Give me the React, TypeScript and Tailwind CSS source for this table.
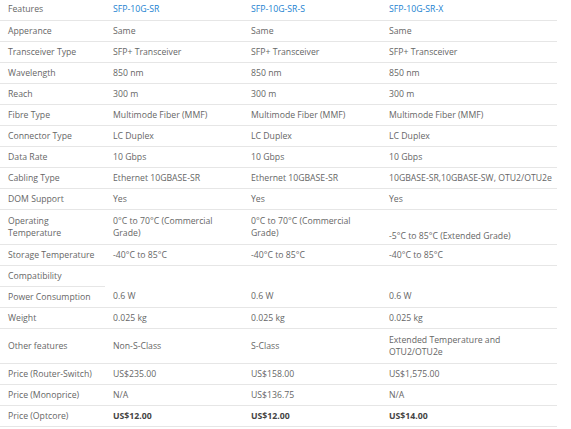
const models = ["SFP-10G-SR", "SFP-10G-SR-S", "SFP-10G-SR-X"];

type Row = {
  label: React.ReactNode;
  values: React.ReactNode[];
  bold?: boolean;
  noLine?: boolean;
  shifted?: boolean;
  tall?: boolean;
};

const rows: Row[] = [
  { label: "Apperance", values: ["Same", "Same", "Same"] },
  { label: "Transceiver Type", values: ["SFP+ Transceiver", "SFP+ Transceiver", "SFP+ Transceiver"] },
  { label: "Wavelength", values: ["850 nm", "850 nm", "850 nm"] },
  { label: "Reach", values: ["300 m", "300 m", "300 m"] },
  { label: "Fibre Type", values: ["Multimode Fiber (MMF)", "Multimode Fiber (MMF)", "Multimode Fiber (MMF)"] },
  { label: "Connector Type", values: ["LC Duplex", "LC Duplex", "LC Duplex"] },
  { label: "Data Rate", values: ["10 Gbps", "10 Gbps", "10 Gbps"] },
  { label: "Cabling Type", values: ["Ethernet 10GBASE-SR", "Ethernet 10GBASE-SR", "10GBASE-SR,10GBASE-SW, OTU2/OTU2e"] },
  { label: "DOM Support", values: ["Yes", "Yes", "Yes"] },
  {
    label: (
      <>
        Operating
        <br />
        Temperature
      </>
    ),
    values: ["0°C to 70°C (Commercial Grade)", "0°C to 70°C (Commercial Grade)", "-5°C to 85°C (Extended Grade)"],
    shifted: true,
    tall: true,
  },
  { label: "Storage Temperature", values: ["-40°C to 85°C", "-40°C to 85°C", "-40°C to 85°C"] },
  { label: "Compatibility", values: ["", "", ""], noLine: true },
  { label: "Power Consumption", values: ["0.6 W", "0.6 W", "0.6 W"] },
  { label: "Weight", values: ["0.025 kg", "0.025 kg", "0.025 kg"] },
  {
    label: "Other features",
    values: [
      "Non-S-Class",
      "S-Class",
      <>
        Extended Temperature and
        <br />
        OTU2/OTU2e
      </>,
    ],
    tall: true,
  },
  { label: "Price (Router-Switch)", values: ["US$235.00", "US$158.00", "US$1,575.00"] },
  { label: "Price (Monoprice)", values: ["N/A", "US$136.75", "N/A"] },
  { label: "Price (Optcore)", values: ["US$12.00", "US$12.00", "US$14.00"], bold: true },
];

export default function App() {
  return (
    <div className="bg-white w-[571px] h-[429px] overflow-hidden font-['Open_Sans',sans-serif] text-[8.7px] leading-[12px] text-[#666]">
      <table className="w-[557px] table-fixed border-collapse -mt-[1px]">
        <colgroup>
          <col className="w-[105px]" />
          <col className="w-[138px]" />
          <col className="w-[138px]" />
          <col className="w-[176px]" />
        </colgroup>
        <thead>
          <tr>
            <th className="h-[21px] text-left font-normal pl-2 pr-0 py-1 border-b border-[#e6e6e6]">Features</th>
            {models.map((m) => (
              <th key={m} className="h-[21px] text-left font-normal px-2 py-1 border-b border-[#e6e6e6] text-[#1a7fd0]">
                {m}
              </th>
            ))}
          </tr>
        </thead>
        <tbody>
          {rows.map((row, r) => (
            <tr key={r}>
              <td
                className={`${row.tall ? "h-[35px]" : "h-[21px]"} pl-2 pr-0 py-1 align-middle border-b border-[#e6e6e6]`}
              >
                {row.label}
              </td>
              {row.values.map((v, i) => {
                const extended = row.shifted && i === 2;
                return (
                  <td
                    key={i}
                    className={[
                      row.tall ? "h-[35px]" : "h-[21px]",
                      i === 2 ? "pl-2 pr-0 whitespace-nowrap" : "px-2",
                      extended ? "align-top pt-[20px] pb-0" : "py-1 align-middle",
                      row.noLine ? "" : "border-b border-[#e6e6e6]",
                      row.bold ? "font-bold text-[#444]" : "",
                    ].join(" ")}
                  >
                    {v}
                  </td>
                );
              })}
            </tr>
          ))}
        </tbody>
      </table>
    </div>
  );
}
